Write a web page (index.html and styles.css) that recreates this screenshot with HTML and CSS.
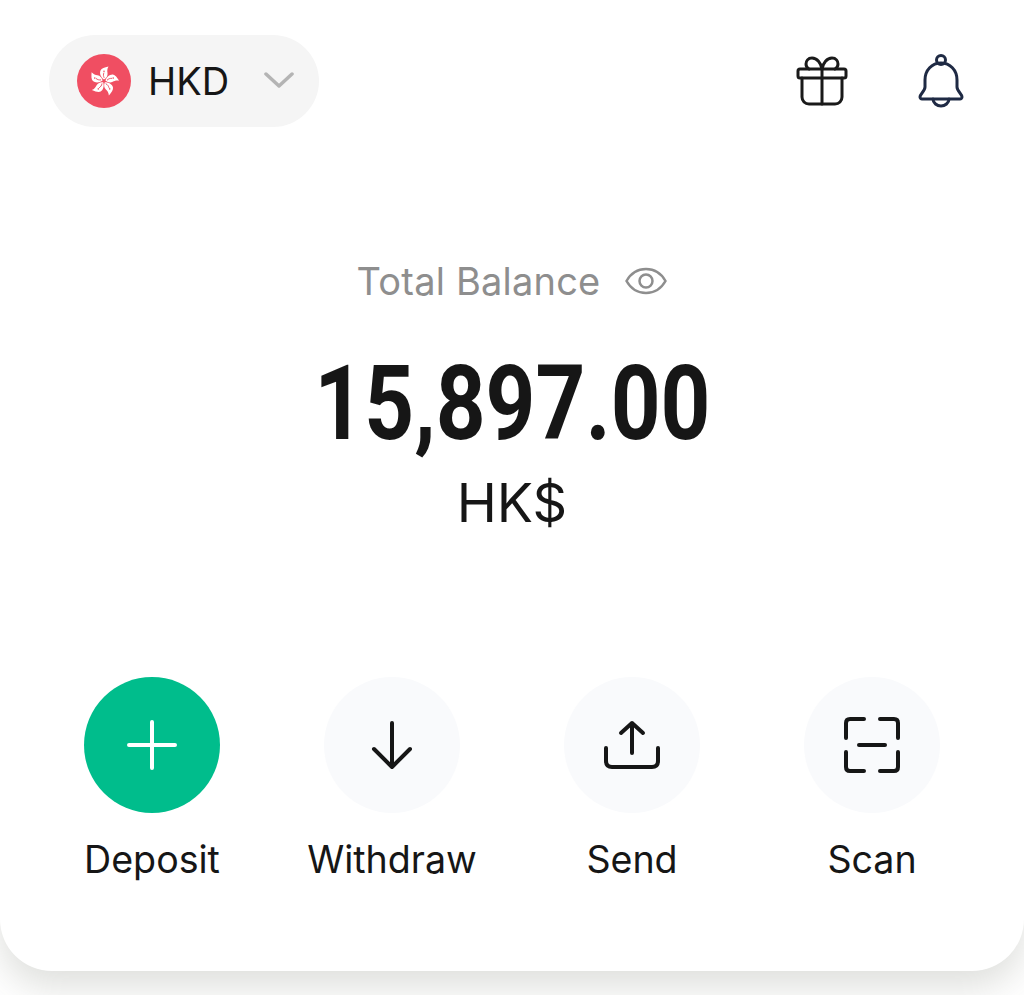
FILE: index.html
```html
<!DOCTYPE html>
<html>
  <head>
    <meta http-equiv="Content-Type" content="text/html; charset=UTF-8" />
    <title>Wallet</title>
    <link rel="stylesheet" href="styles.css">
  </head>
  <body>
    <div class="card">
      <div class="top-bar">
        <div class="currency-pill">
          <svg class="flag" viewBox="0 0 54 54">
            <defs>
              <g id="petal">
                <path fill="#fff" d="M27 25.500C24 23.500 22.200 19.500 23.500 16.500C24.600 14.300 27.500 13.500 31.500 12.500C30 15 30.200 17 30.500 19C30.900 21.500 29.700 24 27 25.500Z" />
                <path fill="none" stroke="#f04e62" stroke-width="0.9" stroke-linecap="round" d="M27 23.500C26.300 22 26.200 20.500 26.800 19" />
                <circle fill="#f04e62" cx="27" cy="17.300" r="0.8" />
              </g>
            </defs>
            <circle cx="27" cy="27" r="27" fill="#f04e62" />
            <use href="#petal" />
            <use href="#petal" transform="rotate(72 27 27)" />
            <use href="#petal" transform="rotate(144 27 27)" />
            <use href="#petal" transform="rotate(216 27 27)" />
            <use href="#petal" transform="rotate(288 27 27)" />
          </svg>
          <span class="currency-code">HKD</span>
          <svg class="chevron" viewBox="0 0 30 18">
            <path d="M2 3L15 15L28 3" />
          </svg>
        </div>
        <div class="top-icons">
          <svg class="gift" viewBox="0 0 52 50">
            <rect x="2" y="13" width="48" height="9" rx="2" />
            <path d="M6 22V41C6 45 9 48 13 48H39C43 48 46 45 46 41V22" />
            <path d="M26 13V48" />
            <path d="M26 13C25 7 21 2 16 2C12 2 10 5 10 8C10 10 11 12 13 13" />
            <path d="M26 13C27 7 31 2 36 2C40 2 42 5 42 8C42 10 41 12 39 13" />
          </svg>
          <svg class="bell" viewBox="0 0 46 54">
            <circle cx="23" cy="6" r="4.500" />
            <path d="M7 33V26C7 16 14 9 23 9C32 9 39 16 39 26V33C39 37 44 40 44 43C44 44 43 45 42 45H4C3 45 2 44 2 43C2 40 7 37 7 33Z" />
            <path d="M15 45C15 49 19 52 23 52C27 52 31 49 31 45" />
          </svg>
        </div>
      </div>

      <div class="balance">
        <div class="balance-label">
          <span>Total Balance</span>
          <svg class="eye" viewBox="0 0 42 28">
            <path d="M1.500 14C6 6 13 2 21 2C29 2 36 6 40.500 14C36 22 29 26 21 26C13 26 6 22 1.500 14Z" />
            <circle cx="21" cy="14" r="6.500" />
          </svg>
        </div>
        <div class="balance-amount">15,897.00</div>
        <div class="balance-unit">HK$</div>
      </div>

      <div class="actions">
        <div class="action">
          <div class="action-circle green">
            <svg class="icon-plus" viewBox="0 0 50 50">
              <path d="M25 2V48M2 25H48" />
            </svg>
          </div>
          <span>Deposit</span>
        </div>
        <div class="action">
          <div class="action-circle">
            <svg class="icon-arrow" viewBox="0 0 50 50">
              <path d="M25 3V47M7 29L25 47L43 29" />
            </svg>
          </div>
          <span>Withdraw</span>
        </div>
        <div class="action">
          <div class="action-circle">
            <svg class="icon-send" viewBox="0 0 56 50">
              <path d="M28 33V3M17 13L28 3L39 13" />
              <path d="M2 28V41C2 45 4 47 8 47H48C52 47 54 45 54 41V28" />
            </svg>
          </div>
          <span>Send</span>
        </div>
        <div class="action">
          <div class="action-circle">
            <svg class="icon-scan" viewBox="0 0 56 56">
              <path d="M20 2H6C3.500 2 2 3.500 2 6V21" />
              <path d="M36 2H50C52.500 2 54 3.500 54 6V21" />
              <path d="M2 35V50C2 52.500 3.500 54 6 54H20" />
              <path d="M54 35V50C54 52.500 52.500 54 50 54H36" />
              <path d="M15 28H41" />
            </svg>
          </div>
          <span>Scan</span>
        </div>
      </div>
    </div>
  </body>
</html>
```

FILE: styles.css
```css
html,
body {
  margin: 0;
  height: 995px;
  overflow: hidden;
  background: #fff;
}
body {
  font-family: Inter, "Liberation Sans", sans-serif;
  color: #161616;
}
.card {
  box-sizing: border-box;
  height: 971px;
  padding-top: 35px;
  background: #fff;
  border-radius: 0 0 52px 52px;
  box-shadow: 0 16px 36px rgba(70, 80, 60, 0.18);
}
.top-bar {
  display: flex;
  justify-content: space-between;
  align-items: center;
  padding: 0 60px 0 49px;
}
.currency-pill {
  display: flex;
  align-items: center;
  box-sizing: border-box;
  width: 270px;
  height: 92px;
  padding-left: 28px;
  background: #f5f5f5;
  border-radius: 46px;
}
.flag {
  width: 54px;
  height: 54px;
}
.currency-code {
  margin-left: 17px;
  font-size: 38px;
}
.chevron {
  width: 30px;
  height: 18px;
  margin: -2px 0 0 35px;
  fill: none;
  stroke: #b4b4b4;
  stroke-width: 3.5;
  stroke-linecap: round;
  stroke-linejoin: round;
}
.top-icons {
  display: flex;
  align-items: center;
  gap: 70px;
}
.gift,
.bell {
  fill: none;
  stroke-width: 3;
  stroke-linecap: round;
  stroke-linejoin: round;
}
.gift {
  width: 52px;
  height: 50px;
  stroke: #1a1a1a;
}
.bell {
  width: 46px;
  height: 54px;
  stroke: #1f2a44;
}
.balance {
  display: flex;
  flex-direction: column;
  align-items: center;
  margin-top: 131px;
}
.balance-label {
  display: flex;
  align-items: center;
  gap: 25px;
  font-size: 38px;
  letter-spacing: 0.2px;
  line-height: 46px;
  color: #8e8e8e;
}
.eye {
  width: 42px;
  height: 28px;
  fill: none;
  stroke: #8e8e8e;
  stroke-width: 2.5;
}
.balance-amount {
  margin-top: 40px;
  font-family: Roboto, sans-serif;
  font-size: 103px;
  font-weight: 700;
  line-height: 120px;
  transform: scaleX(0.845);
}
.balance-unit {
  margin-top: 9px;
  font-size: 54px;
  line-height: 60px;
}
.actions {
  display: grid;
  grid-template-columns: repeat(4, 240px);
  margin-top: 144px;
  padding-left: 32px;
}
.action {
  display: flex;
  flex-direction: column;
  align-items: center;
  gap: 25px;
  font-size: 37.6px;
  line-height: 44px;
}
.action-circle {
  display: flex;
  align-items: center;
  justify-content: center;
  width: 136px;
  height: 136px;
  background: #f9fafc;
  border-radius: 50%;
}
.action-circle.green {
  background: #00bd8c;
}
.action-circle svg {
  fill: none;
  stroke: #161616;
  stroke-width: 4;
  stroke-linecap: round;
  stroke-linejoin: round;
}
.icon-plus,
.icon-arrow {
  width: 50px;
  height: 50px;
}
.action-circle .icon-plus {
  stroke: #fff;
}
.icon-send {
  width: 56px;
  height: 50px;
}
.icon-scan {
  width: 56px;
  height: 56px;
}
```
